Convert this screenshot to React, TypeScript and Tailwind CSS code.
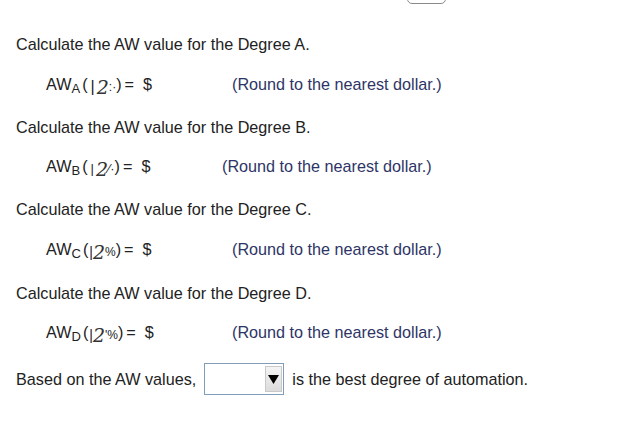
const hand = "font-['DejaVu_Serif',serif] italic text-[19px] leading-none text-[#333]"

function AwRow({
  sub,
  mark,
  width,
  top,
}: {
  sub: string
  mark: React.ReactNode
  width: string
  top: string
}) {
  return (
    <div className={`flex h-[20px] items-center pl-[30px] ${top}`}>
      <div className={`flex items-center ${width}`}>
        <span>AW</span>
        <span className="relative top-[5px] text-[13px]">{sub}</span>
        <span className="ml-[2px] mr-[1px]">(</span>
        <span className="relative top-[3px] flex items-center whitespace-nowrap">{mark}</span>
        <span>)</span>
        <span className="ml-[3px]">=</span>
        <span className="ml-[9px]">$</span>
      </div>
      <span className="text-[#2e3566]">(Round to the nearest dollar.)</span>
    </div>
  )
}

export default function App() {
  return (
    <div className="h-[422px] w-[630px] bg-white font-['Liberation_Sans',Arial,sans-serif] text-[16.2px] leading-[20px] text-[#222]">
      {/* cut-off button at the top edge */}
      <div className="h-[4px] overflow-hidden">
        <div className="-mt-[20px] ml-[407px] h-[24px] w-[39px] rounded-[5px] border border-[#8a8a8a]" />
      </div>

      <div className="pl-[16px] pt-[30px]">
        <div className="h-[20px]">Calculate the AW value for the Degree A.</div>
        <AwRow
          sub="A"
          top="mt-[20px]"
          width="w-[186px]"
          mark={
            <>
              <span className="ml-[2px] mr-[2px] text-[16px] font-light">|</span>
              <span className={hand}>2</span>
              <span className="text-[12px]">:·</span>
            </>
          }
        />

        <div className="mt-[23px] h-[20px]">Calculate the AW value for the Degree B.</div>
        <AwRow
          sub="B"
          top="mt-[19px]"
          width="w-[176px]"
          mark={
            <>
              <span className="ml-[2px] mr-[2px] text-[13px]">|</span>
              <span className={hand}>2</span>
              <span className="text-[13px]">⁄·</span>
            </>
          }
        />

        <div className="mt-[23px] h-[20px]">Calculate the AW value for the Degree C.</div>
        <AwRow
          sub="C"
          top="mt-[20px]"
          width="w-[186px]"
          mark={
            <>
              <span className="text-[14px]">|</span>
              <span className={hand}>2</span>
              <span className="text-[12px]">%</span>
            </>
          }
        />

        <div className="mt-[24px] h-[20px]">Calculate the AW value for the Degree D.</div>
        <AwRow
          sub="D"
          top="mt-[19px]"
          width="w-[186px]"
          mark={
            <>
              <span className="text-[14px]">|</span>
              <span className={hand}>2</span>
              <span className="text-[12px]">'%</span>
            </>
          }
        />

        <div className="mt-[21px] flex h-[32px] items-center">
          <span>Based on the AW values,</span>
          <div className="ml-[8px] flex h-[32px] w-[80px] items-center justify-end border border-[#7f9db9] bg-white pr-[1px]">
            <div className="flex h-[26px] w-[17px] items-center justify-center border border-[#c9c9c9] bg-gradient-to-b from-[#f4f4f4] to-[#dcdcdc]">
              <svg width="11" height="9" viewBox="0 0 11 9">
                <path d="M0 0H11L5.5 9Z" fill="#000" />
              </svg>
            </div>
          </div>
          <span className="ml-[8px]">is the best degree of automation.</span>
        </div>
      </div>
    </div>
  )
}
